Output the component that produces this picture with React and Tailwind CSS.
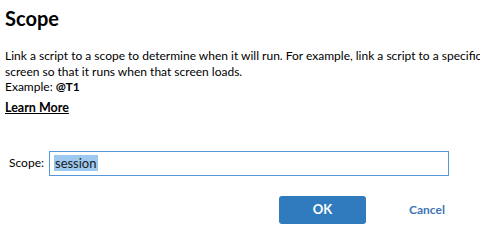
export default function App() {
  return (
    <div className="w-[480px] h-[241px] bg-white overflow-hidden font-['Lato','Liberation_Sans',sans-serif] text-black">
      <div className="pl-[5px] pt-[5px]">
        <h1 className="text-[20px] font-bold leading-[26px] text-black">Scope</h1>
        <div className="mt-[17px] text-[12px] leading-[15.5px] whitespace-nowrap">
          <p>Link a script to a scope to determine when it will run. For example, link a script to a specific</p>
          <p>screen so that it runs when that screen loads.</p>
          <p>Example: <span className="font-bold">@T1</span></p>
        </div>
        <a className="block mt-[5px] text-[12.5px] leading-[16px] font-bold underline text-black">Learn More</a>
      </div>
      <div className="flex items-center mt-[35px] pl-[9px]">
        <span className="text-[12px] w-[40px]">Scope:</span>
        <div className="w-[400px] h-[25px] border border-[#5598da] flex items-center pl-[4px]">
          <span className="bg-[#9dc8ef] text-[13px] leading-[16px] px-[1px] text-[#1a1a1a]">session</span>
        </div>
      </div>
      <div className="flex items-center mt-[20px] pl-[279px]">
        <button className="w-[87px] h-[28px] rounded-[3px] bg-[#2f7bbd] text-white font-bold text-[13px]">OK</button>
        <span className="ml-[43px] text-[12px] font-bold text-[#3f74b8]">Cancel</span>
      </div>
    </div>
  );
}
